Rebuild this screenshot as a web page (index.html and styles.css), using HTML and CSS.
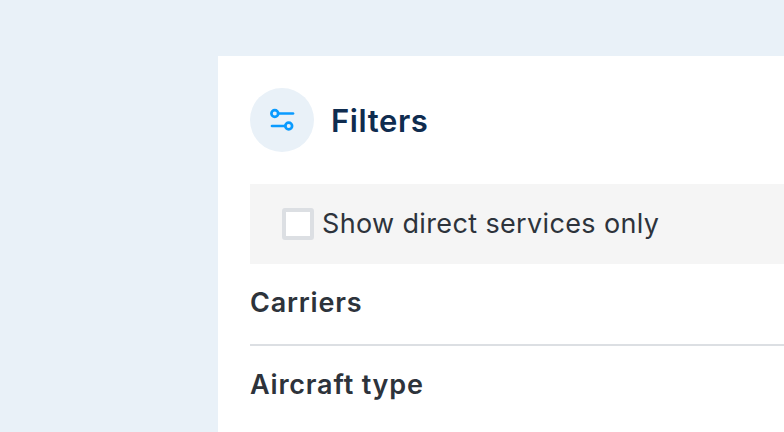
FILE: index.html
```html
<!DOCTYPE html>
<html lang="en">
<head>
    <meta charset="UTF-8">
    <meta name="viewport" content="width=device-width, initial-scale=1.0">
    <title>Filters</title>
    <link rel="stylesheet" href="styles.css">
</head>
<body>
    <div class="panel">
        <div class="panel-header">
            <div class="icon-circle">
                <svg class="filter-icon" width="26" height="26" viewBox="0 0 26 26" fill="none" stroke="#0a9bff" stroke-width="2.7" stroke-linecap="round">
                    <circle cx="5.8" cy="6.5" r="3.4"/>
                    <path d="M9.2 6.5H24"/>
                    <circle cx="19.7" cy="19" r="3.4"/>
                    <path d="M3 19H16.3"/>
                </svg>
            </div>
            <h2 class="panel-title">Filters</h2>
        </div>
        <label class="direct-row">
            <span class="checkbox"></span>
            <span class="direct-label">Show direct services only</span>
        </label>
        <div class="filter-group">Carriers</div>
        <div class="filter-group">Aircraft type</div>
    </div>
</body>
</html>
```

FILE: styles.css
```css
html, body {
    height: 100%;
}
body {
    margin: 0;
    padding: 56px 0 0 218px;
    box-sizing: border-box;
    overflow: hidden;
    background-color: #e9f1f8;
    font-family: Inter, "Noto Sans", sans-serif;
}
.panel {
    width: 566px;
    height: 376px;
    padding: 32px 0 0 32px;
    box-sizing: border-box;
    background: #fff;
}
.panel-header {
    display: flex;
    align-items: center;
    gap: 17px;
    margin-bottom: 32px;
}
.icon-circle {
    display: flex;
    justify-content: center;
    align-items: center;
    width: 64px;
    height: 64px;
    border-radius: 50%;
    background: #e9f1f8;
}
.panel-title {
    margin: 0;
    font-size: 31px;
    font-weight: 600;
    letter-spacing: 0.6px;
    color: #0f2c4f;
}
.direct-row {
    display: flex;
    align-items: center;
    gap: 8px;
    height: 80px;
    padding-left: 32px;
    background: #f5f5f5;
}
.checkbox {
    width: 32px;
    height: 32px;
    box-sizing: border-box;
    border: 4px solid #dcdfe3;
    border-radius: 3px;
    background: #fff;
}
.direct-label {
    font-size: 27px;
    letter-spacing: 0.36px;
    line-height: 30px;
    color: #2d333b;
}
.filter-group {
    height: 80px;
    line-height: 78px;
    font-size: 27px;
    font-weight: 600;
    letter-spacing: 0.8px;
    color: #2d333b;
}
.filter-group + .filter-group {
    border-top: 2px solid #dcdfe3;
}
```
